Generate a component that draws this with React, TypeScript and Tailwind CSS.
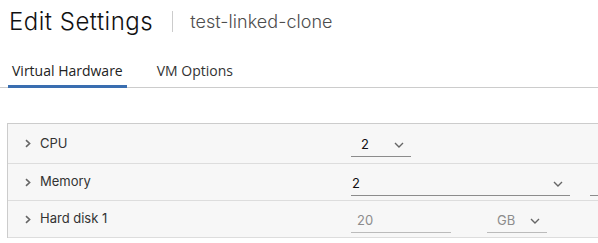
const rowClass = "flex items-center border-b border-[#dddddd]"
const metro = { fontFamily: 'Inter, "Liberation Sans", sans-serif' }

const Chevron = () => (
  <svg width="8" height="9" viewBox="0 0 8 9" className="text-[#666666]">
    <path d="M2 1.2 L5.6 4.5 L2 7.8" fill="none" stroke="currentColor" strokeWidth="1.6" />
  </svg>
)

const Caret = () => (
  <svg width="10" height="6" viewBox="0 0 10 6" className="text-[#666666]">
    <path d="M1 1 L5 5 L9 1" fill="none" stroke="currentColor" strokeWidth="1.4" />
  </svg>
)

const App = () => {
  return (
    <div
      className="h-[243px] w-[598px] overflow-hidden bg-white"
      style={{ fontFamily: '"Open Sans", "Liberation Sans", sans-serif' }}
    >
      {/* header */}
      <div className="flex h-[42px] items-center pl-[9px] pt-[1px]" style={metro}>
        <span className="text-[24px] font-light leading-none tracking-[0.5px] text-[#111111]">
          Edit Settings
        </span>
        <span className="ml-[19px] mr-[17px] h-[21px] w-px bg-[#cccccc]" />
        <span className="text-[18px] font-light leading-none tracking-[0.05px] text-[#4d4d4d]">
          test-linked-clone
        </span>
      </div>

      {/* tabs */}
      <div className="mt-[18px] flex border-b border-[#cccccc] pl-[8px]">
        <div className="-mb-px border-b-[3px] border-[#3a6eb0] px-[4px] pb-[3px] text-[14px] leading-[22px] text-[#222222]">
          Virtual Hardware
        </div>
        <div className="ml-[26px] px-[4px] pb-[3px] text-[14px] leading-[22px] text-[#333333]">
          VM Options
        </div>
      </div>

      {/* hardware list */}
      <div
        className="ml-[7px] mt-[35px] w-[700px] border-l border-t border-[#cccccc] bg-[#f7f7f7] text-[13px] text-[#333333]"
        style={metro}
      >
        <div className={`${rowClass} h-[40px]`}>
          <div className="flex w-[343px] items-center pl-[16px]">
            <Chevron />
            <span className="ml-[8px]">CPU</span>
          </div>
          <div className="mt-[4px] flex h-[23px] w-[60px] items-center justify-between border-b border-[#8c8c8c] pl-[10px] pr-[7px] text-[#111111]">
            <span>2</span>
            <Caret />
          </div>
        </div>

        <div className={`${rowClass} h-[37px]`}>
          <div className="flex w-[343px] items-center pl-[16px]">
            <Chevron />
            <span className="ml-[8px]">Memory</span>
          </div>
          <div className="mt-[4px] flex h-[23px] w-[219px] items-center justify-between border-b border-[#8c8c8c] pl-[1px] pr-[7px] text-[#111111]">
            <span>2</span>
            <Caret />
          </div>
          <div className="ml-[20px] mt-[4px] h-[23px] w-[60px] border-b border-[#8c8c8c]" />
        </div>

        <div className={`${rowClass} h-[37px]`}>
          <div className="flex w-[343px] items-center pl-[16px]">
            <Chevron />
            <span className="ml-[8px]">Hard disk 1</span>
          </div>
          <div className="mt-[4px] flex h-[23px] w-[100px] items-center border-b border-[#bbbbbb] pl-[6px] text-[#8c8c8c]">
            20
          </div>
          <div className="ml-[36px] mt-[4px] flex h-[23px] w-[60px] items-center justify-between border-b border-[#bbbbbb] pl-[10px] pr-[7px] text-[#8c8c8c]">
            <span>GB</span>
            <Caret />
          </div>
        </div>
      </div>
    </div>
  )
}

export default App
